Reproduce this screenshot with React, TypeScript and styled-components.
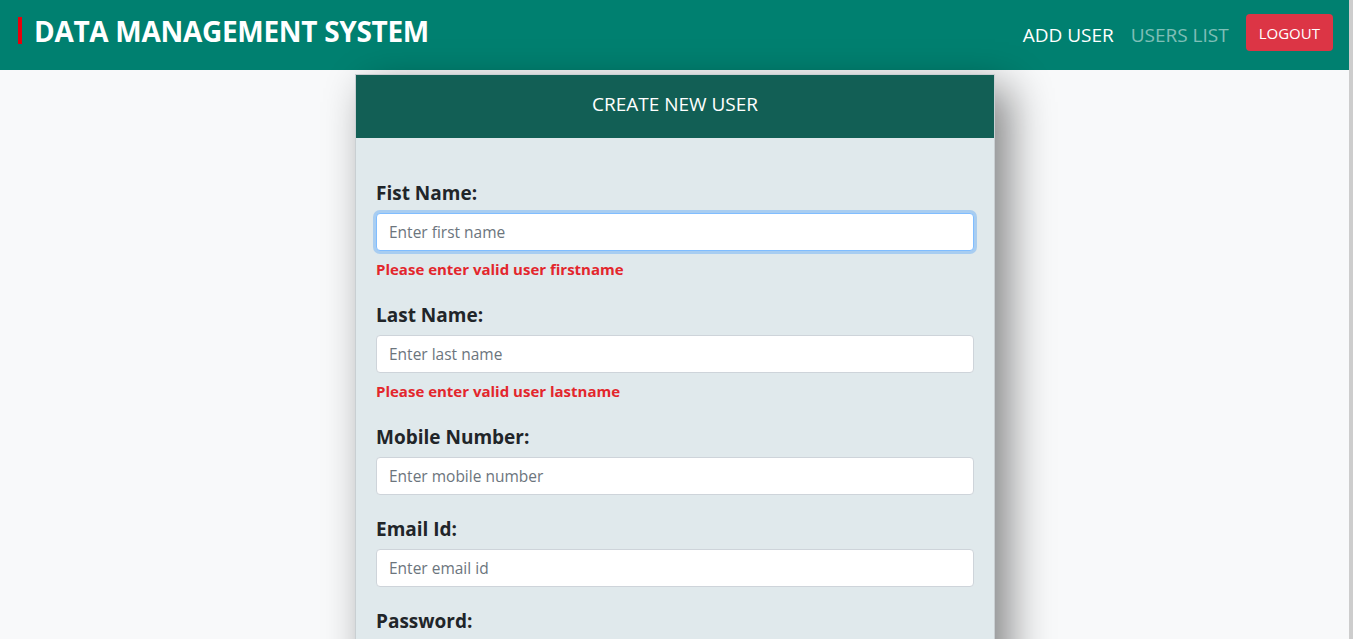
import React from "react";
import styled, { createGlobalStyle } from "styled-components";

const GlobalStyle = createGlobalStyle`
  * { box-sizing: border-box; }
  html, body { margin: 0; padding: 0; height: 100%; overflow: hidden; }
  body {
    font-family: "Open Sans", "Noto Sans", sans-serif;
    background: #f8f9fa;
    color: #212529;
  }
  #root { height: 100%; }
`;

const Page = styled.div`
  display: flex;
  height: 639px;
`;

const Main = styled.div`
  flex: 1;
  display: flex;
  flex-direction: column;
  min-width: 0;
  overflow: hidden;
`;

const ScrollStrip = styled.div`
  width: 4px;
  background: #cdcdcd;
`;

const NavBar = styled.header`
  height: 70px;
  flex-shrink: 0;
  background: #008070;
  display: flex;
  align-items: center;
  justify-content: space-between;
  padding: 0 16px 0 18px;
`;

const Brand = styled.h1`
  margin: 0 0 9px;
  display: flex;
  align-items: center;
  color: #fff;
  font-size: 28px;
  font-weight: 700;
  line-height: 28px;
  letter-spacing: -0.3px;
  &::before {
    content: "";
    width: 4px;
    height: 27px;
    background: #e8000b;
    margin-right: 12px;
  }
`;

const Nav = styled.nav`
  display: flex;
  align-items: center;
  gap: 17px;
  margin-bottom: 5px;
`;

const NavLink = styled.a<{ $muted?: boolean }>`
  color: ${(p) => (p.$muted ? "rgba(255,255,255,0.5)" : "#fff")};
  font-size: 19px;
  text-decoration: none;
  margin-top: 4px;
`;

const LogoutButton = styled.button`
  height: 37px;
  padding: 0 13px;
  background: #dc3545;
  color: #fff;
  border: none;
  border-radius: 4px;
  font-family: inherit;
  font-size: 15px;
`;

const Content = styled.main`
  display: flex;
  justify-content: center;
  padding-top: 4px;
  padding-left: 1px;
`;

const Card = styled.section`
  width: 640px;
  border: 1px solid #c9cfd2;
  box-shadow: 14px 14px 40px rgba(0, 0, 0, 0.48);
  background: #e0e9ec;
`;

const CardHeader = styled.div`
  height: 63px;
  padding-bottom: 5px;
  background: #125f55;
  color: #fff;
  display: flex;
  align-items: center;
  justify-content: center;
  font-size: 19px;
`;

const CardBody = styled.form`
  padding: 42px 20px 0;
  display: flex;
  flex-direction: column;
  gap: 21px;
`;

const Group = styled.div`
  display: flex;
  flex-direction: column;
`;

const Label = styled.label`
  font-weight: 700;
  font-size: 19px;
  line-height: 26px;
  margin-bottom: 7px;
`;

const Input = styled.input<{ $focused?: boolean }>`
  height: 38px;
  width: 100%;
  padding: 0 12px;
  font-family: inherit;
  font-size: 15.5px;
  color: #495057;
  background: #fff;
  border: 1px solid ${(p) => (p.$focused ? "#80bdff" : "#ced4da")};
  border-radius: 4px;
  outline: none;
  box-shadow: ${(p) => (p.$focused ? "0 0 0 3px rgba(0,123,255,0.25)" : "none")};
  &::placeholder { color: #6c757d; }
`;

const ErrorText = styled.div`
  margin-top: 6px;
  color: #e3262c;
  font-weight: 700;
  font-size: 15px;
  line-height: 24px;
`;

const fields = [
  { label: "Fist Name:", placeholder: "Enter first name", error: "Please enter valid user firstname", focused: true },
  { label: "Last Name:", placeholder: "Enter last name", error: "Please enter valid user lastname" },
  { label: "Mobile Number:", placeholder: "Enter mobile number" },
  { label: "Email Id:", placeholder: "Enter email id" },
  { label: "Password:", placeholder: "Enter password" },
];

export default function App() {
  return (
    <>
      <GlobalStyle />
      <Page>
        <Main>
          <NavBar>
            <Brand>DATA MANAGEMENT SYSTEM</Brand>
            <Nav>
              <NavLink href="#">ADD USER</NavLink>
              <NavLink href="#" $muted>USERS LIST</NavLink>
              <LogoutButton>LOGOUT</LogoutButton>
            </Nav>
          </NavBar>
          <Content>
            <Card>
              <CardHeader>CREATE NEW USER</CardHeader>
              <CardBody onSubmit={(e) => e.preventDefault()}>
                {fields.map((f) => (
                  <Group key={f.label}>
                    <Label>{f.label}</Label>
                    <Input $focused={f.focused} placeholder={f.placeholder} readOnly />
                    {f.error && <ErrorText>{f.error}</ErrorText>}
                  </Group>
                ))}
              </CardBody>
            </Card>
          </Content>
        </Main>
        <ScrollStrip />
      </Page>
    </>
  );
}
